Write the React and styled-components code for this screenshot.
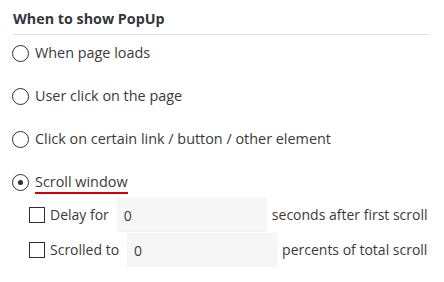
import React, { useState } from 'react';
import styled, { createGlobalStyle } from "styled-components";

const OPTIONS = [
  { id: 'load', label: "When page loads" },
  { id: 'click', label: "User click on the page" },
  { id: 'element', label: "Click on certain link / button / other element" },
  { id: 'scroll', label: "Scroll window" },
];

const SCROLL_RULES = [
  { id: 'delay', label: "Delay for", suffix: "seconds after first scroll" },
  { id: 'percent', label: "Scrolled to", suffix: "percents of total scroll" },
];

function App() {
  const [selected, setSelected] = useState('scroll');

  return (
    <>
      <GlobalStyle />
      <Panel>
        <Title>When to show PopUp</Title>
        <OptionList>
          {OPTIONS.map(({ id, label }) => (
            <Option key={id} onClick={() => setSelected(id)}>
              <Radio $checked={selected === id} />
              <OptionLabel $active={id === 'scroll'}>{label}</OptionLabel>
            </Option>
          ))}
        </OptionList>
        <SubList>
          {SCROLL_RULES.map(({ id, label, suffix }) => (
            <SubRow key={id}>
              <Checkbox />
              <SubLabel>{label}</SubLabel>
              <NumberInput defaultValue="0" />
              <SubLabel>{suffix}</SubLabel>
            </SubRow>
          ))}
        </SubList>
      </Panel>
    </>
  )
}

export default App

const GlobalStyle = createGlobalStyle`
  body {
    margin: 0;
    background: #fff;
    font-family: "Open Sans", "Noto Sans", sans-serif;
    color: #3a3a3a;
  }
`

const Panel = styled.div`
  width: 418px;
  padding: 9px 14px 0 12px;
`

const Title = styled.div`
  font-size: 14.3px;
  font-weight: 700;
  line-height: 20px;
  color: #32373c;
  margin-left: 1px;
  padding-bottom: 5px;
  border-bottom: 1px solid #e2e2e2;
`

const OptionList = styled.div`
  display: flex;
  flex-direction: column;
  gap: 19px;
  margin-top: 6px;
`

const Option = styled.label`
  display: flex;
  align-items: center;
  gap: 6px;
  height: 24px;
  cursor: pointer;
`

const Radio = styled.span`
  box-sizing: border-box;
  width: 17px;
  height: 17px;
  border-radius: 50%;
  border: 1.4px solid #2e2e2e;
  display: flex;
  align-items: center;
  justify-content: center;
  &::after {
    content: "";
    width: 5px;
    height: 5px;
    border-radius: 50%;
    background: #2e2e2e;
    display: ${p => (p.$checked ? 'block' : 'none')};
  }
`

const OptionLabel = styled.span`
  font-size: 14.4px;
  line-height: 20px;
  ${p => p.$active && `
    margin-top: 2px;
    border-bottom: 2px solid #d40000;
  `}
`

const SubList = styled.div`
  display: flex;
  flex-direction: column;
  gap: 1px;
  margin-top: 4px;
  padding-left: 17px;
`

const SubRow = styled.div`
  display: flex;
  align-items: center;
  height: 34px;
`

const Checkbox = styled.span`
  box-sizing: border-box;
  width: 16px;
  height: 16px;
  border: 1.3px solid #2e2e2e;
  margin-right: 5px;
`

const SubLabel = styled.span`
  font-size: 14px;
  line-height: 20px;
`

const NumberInput = styled.input`
  box-sizing: border-box;
  width: 150px;
  height: 34px;
  margin: 0 5px 0 8px;
  padding: 0 6px;
  border: 1px solid #f3f3f3;
  background: #f6f6f6;
  font-family: inherit;
  font-size: 14px;
  color: #3a3a3a;
  outline: none;
`
